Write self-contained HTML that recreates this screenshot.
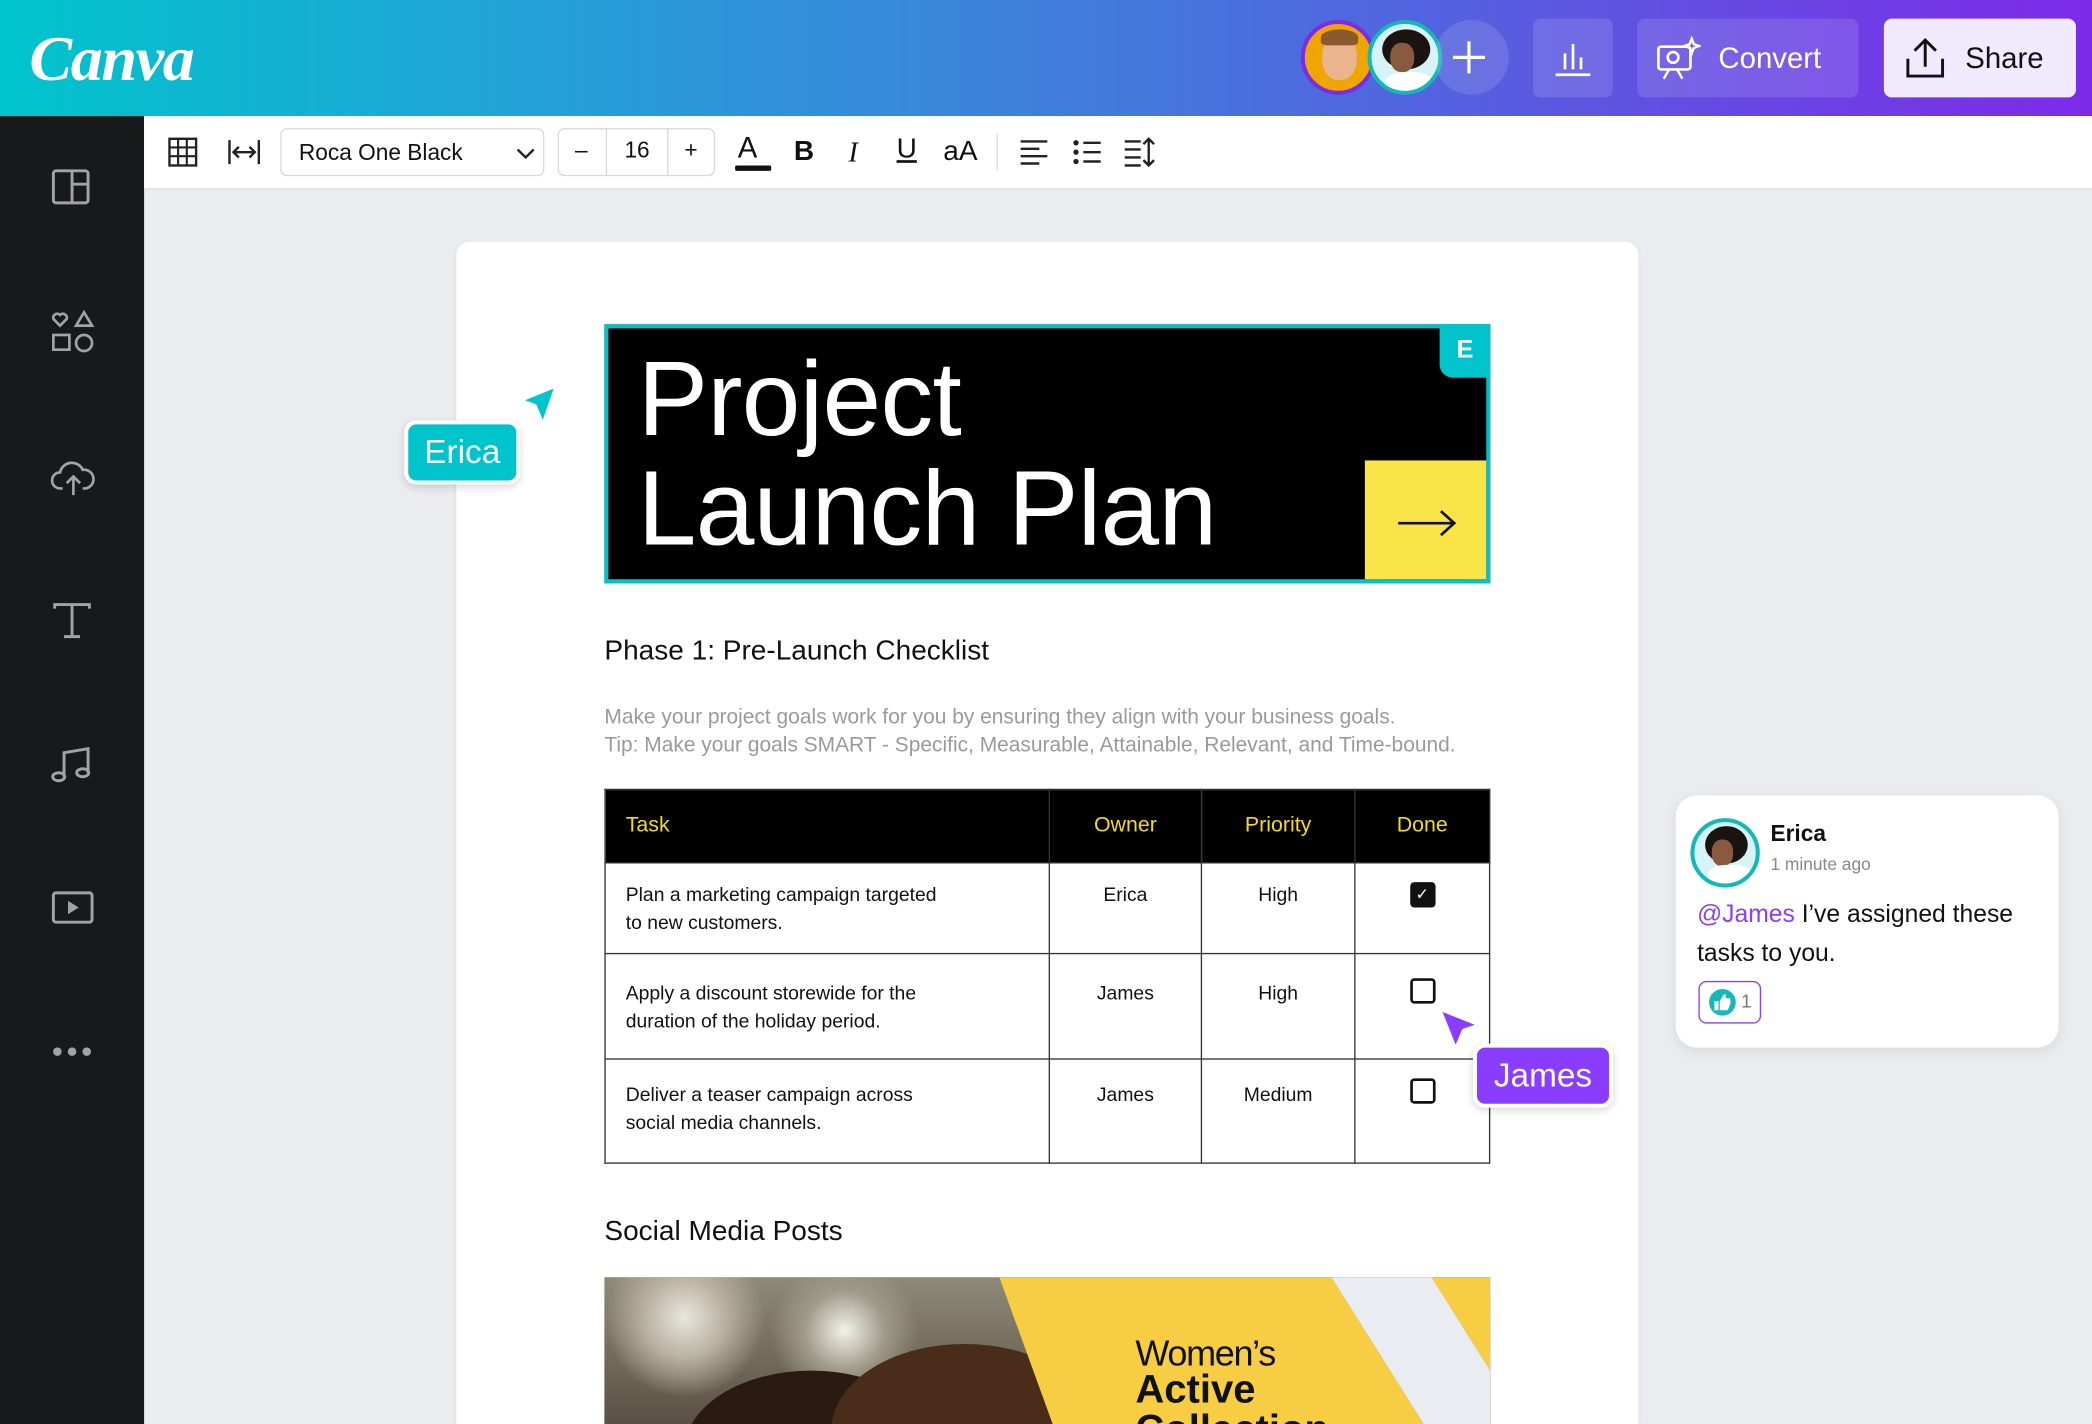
<!DOCTYPE html>
<html><head><meta charset="utf-8">
<style>
*{box-sizing:border-box;margin:0;padding:0}
html,body{width:2092px;height:1424px;overflow:hidden;background:#ebecf0}
#w{width:1568px;height:1067px;transform:scale(1.33418,1.3346);transform-origin:0 0;position:relative;font-family:"Liberation Sans","DejaVu Sans",sans-serif;background:#ebecf0;overflow:hidden}
.abs{position:absolute}
#top{left:0;top:0;width:1568px;height:87px;background:linear-gradient(90deg,#00c4cc 0%,#1fa6d6 22%,#3a86db 45%,#5560df 70%,#7d2ae8 100%)}
.logo{left:22px;top:17px;color:#fff;font-family:"Liberation Serif",serif;font-style:italic;font-weight:bold;font-size:48px;letter-spacing:-1px}
.av{border-radius:50%;width:56px;height:56px;top:15px;overflow:hidden}
.btn{top:14px;height:59px;border-radius:6px;background:rgba(255,255,255,.13);color:#fff;font-size:22px;display:flex;align-items:center}
#tb{left:108px;top:87px;width:1460px;height:55px;background:#fff;border-bottom:1px solid #dcdde2}
#side{left:0;top:87px;width:108px;height:980px;background:#18191b}
.ic{position:absolute;left:38px}
.page{left:342px;top:181px;width:886px;height:886px;background:#fff;border-radius:10px 10px 0 0;box-shadow:0 1px 3px rgba(0,0,0,.08)}
table{border-collapse:collapse;position:absolute;left:453px;top:591px;width:664px;font-size:14.5px;color:#111}
td,th{border:1px solid #333;vertical-align:top}
th{background:#000;color:#f5dc12;font-weight:normal;height:55px;vertical-align:middle;font-size:16px;text-align:center}
td{padding:14px 15px 0 15px;line-height:21px}
.cb{display:inline-block;width:19px;height:19px;border:2px solid #111;border-radius:3px}
</style></head><body><div id="w">
<div id="top" class="abs"></div>
<div class="abs logo">Canva</div>
<div class="abs av" style="left:975px;background:#f0a500;border:3px solid #7d2ae8"><div class="abs" style="left:13px;top:8px;width:26px;height:34px;border-radius:45%;background:#e9b48e"></div><div class="abs" style="left:12px;top:4px;width:28px;height:12px;border-radius:50% 50% 20% 20%;background:#8a5a2e"></div></div>
<div class="abs av" style="left:1025px;background:#d8f3f5;border:3px solid #14b8b8"><div class="abs" style="left:8px;top:4px;width:36px;height:30px;border-radius:50%;background:#1a1410"></div><div class="abs" style="left:14px;top:14px;width:18px;height:22px;border-radius:45%;background:#8a5a40"></div><div class="abs" style="left:10px;top:36px;width:36px;height:20px;border-radius:40% 40% 0 0;background:#fff"></div></div>
<div class="abs" style="left:1075px;top:15px;width:56px;height:56px;border-radius:50%;background:rgba(255,255,255,.12)"></div>
<svg class="abs" style="left:1088px;top:30px" width="26" height="26"><path d="M13 1v24M1 13h24" stroke="#fff" stroke-width="2.4"/></svg>
<div class="abs btn" style="left:1149px;width:60px;justify-content:center"><svg width="30" height="28"><path d="M2 26h26M9 22V10M15 22V3M21 22V13" stroke="#fff" stroke-width="2" fill="none"/></svg></div>
<div class="abs btn" style="left:1227px;width:166px;padding-left:14px"><svg width="34" height="34" viewBox="0 0 34 34"><rect x="2" y="8" width="24" height="17" rx="2" stroke="#fff" stroke-width="2" fill="none"/><circle cx="13" cy="16" r="4" stroke="#fff" stroke-width="2" fill="none"/><path d="M10 25l-4 7M16 25l4 7M27 2l1.5 4 4 1.5-4 1.5-1.5 4-1.5-4-4-1.5 4-1.5z" stroke="#fff" stroke-width="1.8" fill="none"/></svg><span style="margin-left:13px">Convert</span></div>
<div class="abs btn" style="left:1412px;width:144px;background:#f0eafc;color:#111;padding-left:16px"><svg width="30" height="32"><path d="M15 22V3M7 10l8-8 8 8M2 16v13h26V16" stroke="#111" stroke-width="2.2" fill="none"/></svg><span style="margin-left:15px">Share</span></div>

<div id="side" class="abs"></div>
<svg class="ic" style="top:126px" width="32" height="30"><rect x="2" y="2" width="26" height="24" rx="2" stroke="#a3a3a3" stroke-width="2.2" fill="none"/><path d="M16 2v24M16 12h12" stroke="#a3a3a3" stroke-width="2.2"/></svg>
<svg class="ic" style="top:232px" width="34" height="34"><path d="M7 12l-5-5a3 3 0 015-3 3 3 0 015 3z M19 12l6-10 6 10z" stroke="#a3a3a3" stroke-width="2" fill="none"/><rect x="2" y="19" width="12" height="11" stroke="#a3a3a3" stroke-width="2" fill="none"/><circle cx="25" cy="25" r="6" stroke="#a3a3a3" stroke-width="2" fill="none"/></svg>
<svg class="ic" style="top:340px" width="34" height="34"><path d="M9 26H7a6 6 0 010-12 9 9 0 0117-2 6 6 0 012 14h-2M17 31V17M12 22l5-5 5 5" stroke="#a3a3a3" stroke-width="2" fill="none"/></svg>
<svg class="ic" style="top:450px" width="32" height="30"><path d="M3 6V3h26v3M16 3v24M10 27h12" stroke="#a3a3a3" stroke-width="2.2" fill="none"/></svg>
<svg class="ic" style="top:556px" width="34" height="32"><path d="M10 26V8l18-3v18" stroke="#a3a3a3" stroke-width="2.2" fill="none"/><ellipse cx="6" cy="26" rx="4.5" ry="3" stroke="#a3a3a3" stroke-width="2.2" fill="none"/><ellipse cx="24" cy="23" rx="4.5" ry="3" stroke="#a3a3a3" stroke-width="2.2" fill="none"/></svg>
<svg class="ic" style="top:666px" width="34" height="30"><rect x="2" y="3" width="29" height="22" rx="2" stroke="#a3a3a3" stroke-width="2.2" fill="none"/><path d="M13 9l8 5-8 5z" fill="#a3a3a3"/></svg>
<svg class="ic" style="top:782px" width="34" height="12"><circle cx="5" cy="6" r="3.2" fill="#a3a3a3"/><circle cx="16" cy="6" r="3.2" fill="#a3a3a3"/><circle cx="27" cy="6" r="3.2" fill="#a3a3a3"/></svg>

<div id="tb" class="abs"></div>
<svg class="abs" style="left:126px;top:103px" width="22" height="22"><rect x="1" y="1" width="20" height="20" stroke="#222" stroke-width="1.8" fill="none"/><path d="M1 7.5h20M1 14h20M7.5 1v20M14 1v20" stroke="#222" stroke-width="1.6"/></svg>
<svg class="abs" style="left:170px;top:104px" width="26" height="20"><path d="M2 1v18M24 1v18M6 10h14M9 6l-4 4 4 4M17 6l4 4-4 4" stroke="#222" stroke-width="1.8" fill="none"/></svg>
<div class="abs" style="left:210px;top:96px;width:198px;height:36px;border:1px solid #d8d9de;border-radius:5px;font-size:17px;color:#111;padding:8px 0 0 13px">Roca One Black<svg class="abs" style="left:176px;top:14px" width="14" height="9"><path d="M1 1l6 6 6-6" stroke="#222" stroke-width="1.8" fill="none"/></svg></div>
<div class="abs" style="left:418px;top:96px;width:118px;height:36px;border:1px solid #d8d9de;border-radius:5px;font-size:17px;color:#111"><span class="abs" style="left:12px;top:6px">–</span><div class="abs" style="left:35px;top:-1px;width:47px;height:36px;border-left:1px solid #d8d9de;border-right:1px solid #d8d9de;text-align:center;padding-top:7px">16</div><span class="abs" style="left:94px;top:6px">+</span></div>
<div class="abs" style="left:553px;top:98px;font-size:22px;color:#111">A</div><div class="abs" style="left:551px;top:124px;width:27px;height:4px;background:#111;border-radius:1px"></div>
<div class="abs" style="left:595px;top:102px;font-size:21px;font-weight:bold;color:#111">B</div>
<div class="abs" style="left:636px;top:102px;font-size:21px;font-style:italic;font-family:'Liberation Serif',serif;color:#111">I</div>
<div class="abs" style="left:672px;top:100px;font-size:21px;text-decoration:underline;color:#111">U</div>
<div class="abs" style="left:707px;top:102px;font-size:21px;color:#111">aA</div>
<div class="abs" style="left:747px;top:100px;width:1px;height:28px;background:#ddd"></div>
<svg class="abs" style="left:764px;top:104px" width="22" height="20"><path d="M1 2h20M1 7.5h14M1 13h20M1 18.5h14" stroke="#222" stroke-width="1.8"/></svg>
<svg class="abs" style="left:804px;top:104px" width="22" height="20"><circle cx="2.5" cy="3" r="2" fill="#222"/><circle cx="2.5" cy="10" r="2" fill="#222"/><circle cx="2.5" cy="17" r="2" fill="#222"/><path d="M8 3h13M8 10h13M8 17h13" stroke="#222" stroke-width="1.8"/></svg>
<svg class="abs" style="left:842px;top:103px" width="24" height="22"><path d="M1 3h12M1 9h12M1 15h12M1 21h12M19 1v20M15 5l4-4 4 4M15 17l4 4 4-4" stroke="#222" stroke-width="1.8" fill="none"/></svg>

<div class="abs page"></div>
<div class="abs" style="left:453px;top:243px;width:664px;height:194px;background:#000;border:3px solid #00c4cc"></div>
<div class="abs" style="left:478px;top:258px;color:#fff;font-size:79px;line-height:82px;letter-spacing:-0.5px">Project<br>Launch Plan</div>
<div class="abs" style="left:1023px;top:345px;width:91px;height:89px;background:#f9e547"></div>
<svg class="abs" style="left:1047px;top:381px" width="46" height="22"><path d="M1 11h42M33 2l10 9-10 9" stroke="#111" stroke-width="2" fill="none"/></svg>
<div class="abs" style="left:1079px;top:243px;width:38px;height:40px;background:#00c4cc;border-bottom-left-radius:10px;color:#fff;font-size:19px;font-weight:bold;text-align:center;padding-top:9px">E</div>
<svg class="abs" style="left:386px;top:286px" width="36" height="38"><path d="M31 3L4 14l11 4 6 14z" fill="#00c4cc" stroke="#fff" stroke-width="2.5" stroke-linejoin="round"/></svg>
<div class="abs" style="left:303px;top:315px;width:87px;height:48px;background:#00c4cc;border:3px solid #fff;border-radius:9px;box-shadow:0 2px 6px rgba(0,0,0,.15);color:#fff;font-size:25px;text-align:center;padding-top:7px">Erica</div>

<div class="abs" style="left:453px;top:476px;font-size:21px;color:#111">Phase 1: Pre-Launch Checklist</div>
<div class="abs" style="left:453px;top:527px;font-size:15.7px;line-height:21px;color:#9a9a9a">Make your project goals work for you by ensuring they align with your business goals.<br>Tip: Make your goals SMART - Specific, Measurable, Attainable, Relevant, and Time-bound.</div>

<table>
<tr><th style="width:333px;text-align:left;padding-left:15px">Task</th><th style="width:114px">Owner</th><th style="width:115px">Priority</th><th>Done</th></tr>
<tr style="height:68px"><td>Plan a marketing campaign targeted<br>to new customers.</td><td style="text-align:center">Erica</td><td style="text-align:center">High</td><td style="text-align:center;padding-top:13px"><span class="cb" style="background:#111;color:#fff;font-size:12px;line-height:15px">✓</span></td></tr>
<tr style="height:79px"><td style="padding-top:20px">Apply a discount storewide for the<br>duration of the holiday period.</td><td style="text-align:center;padding-top:20px">James</td><td style="text-align:center;padding-top:20px">High</td><td style="text-align:center;padding-top:18px"><span class="cb"></span></td></tr>
<tr style="height:78px"><td style="padding-top:17px">Deliver a teaser campaign across<br>social media channels.</td><td style="text-align:center;padding-top:17px">James</td><td style="text-align:center;padding-top:17px">Medium</td><td style="text-align:center;padding-top:14px"><span class="cb"></span></td></tr>
</table>
<svg class="abs" style="left:1074px;top:752px" width="38" height="38"><path d="M5 4l30 12-12 4-6 14z" fill="#8b3dff" stroke="#fff" stroke-width="2.5" stroke-linejoin="round"/></svg>
<div class="abs" style="left:1104px;top:782px;width:105px;height:48px;background:#8b3dff;border:3px solid #fff;border-radius:9px;box-shadow:0 2px 6px rgba(0,0,0,.15);color:#fff;font-size:25px;text-align:center;padding-top:7px">James</div>

<div class="abs" style="left:453px;top:911px;font-size:21px;color:#111">Social Media Posts</div>
<div class="abs" style="left:453px;top:957px;width:664px;height:110px;overflow:hidden;background:radial-gradient(circle at 60px 30px,#e8e6df 0,#b9b2a0 30px,transparent 60px),radial-gradient(circle at 180px 40px,#f3f1ea 0,#a09a88 30px,transparent 55px),linear-gradient(180deg,#8f8a78,#5a5043)">
<div class="abs" style="left:60px;top:70px;width:190px;height:120px;border-radius:50%;background:#2a1a10"></div>
<div class="abs" style="left:170px;top:50px;width:200px;height:130px;border-radius:50%;background:#4a2c1a"></div>
<svg class="abs" style="left:0;top:0" width="664" height="110"><path d="M296 0H545L614 110H336z" fill="#f6cd43"/><path d="M545 0H620L664 70V110H614z" fill="#e9ecf0"/><path d="M620 0H664V70z" fill="#f6cd43"/></svg>
<div class="abs" style="left:398px;top:42px;font-size:27px;color:#111;letter-spacing:-1px">Women’s</div>
<div class="abs" style="left:398px;top:70px;font-size:30px;font-weight:bold;color:#111;line-height:30px">Active<br>Collection</div>
</div>

<div class="abs" style="left:1256px;top:596px;width:287px;height:189px;background:#fff;border-radius:16px;box-shadow:0 3px 10px rgba(0,0,0,.08)"></div>
<div class="abs" style="left:1267px;top:613px;width:52px;height:52px;border-radius:50%;border:3px solid #14b8b8;background:#d8f3f5;overflow:hidden"><div class="abs" style="left:8px;top:3px;width:32px;height:28px;border-radius:50%;background:#1a1410"></div><div class="abs" style="left:13px;top:13px;width:16px;height:20px;border-radius:45%;background:#8a5a40"></div><div class="abs" style="left:10px;top:32px;width:34px;height:20px;border-radius:40% 40% 0 0;background:#fff"></div></div>
<div class="abs" style="left:1327px;top:615px;font-size:17px;font-weight:bold;color:#111">Erica</div>
<div class="abs" style="left:1327px;top:640px;font-size:13px;color:#888">1 minute ago</div>
<div class="abs" style="left:1272px;top:670px;font-size:18.5px;line-height:29px;color:#111"><span style="color:#8b3dff">@James</span> I’ve assigned these<br>tasks to you.</div>
<div class="abs" style="left:1273px;top:735px;width:47px;height:32px;border:1.5px solid #8b3dff;border-radius:6px"><div class="abs" style="left:7px;top:5px;width:20px;height:20px;border-radius:50%;background:#14b8b8"></div><svg class="abs" style="left:10px;top:8px" width="14" height="14"><path d="M1 6h3v7H1zM5 6l3-5c1.5 0 2 1 1.5 3H13v4l-2 5H5z" fill="#fff"/></svg><span class="abs" style="left:31px;top:6px;font-size:14px;color:#777">1</span></div>
</div></body></html>
